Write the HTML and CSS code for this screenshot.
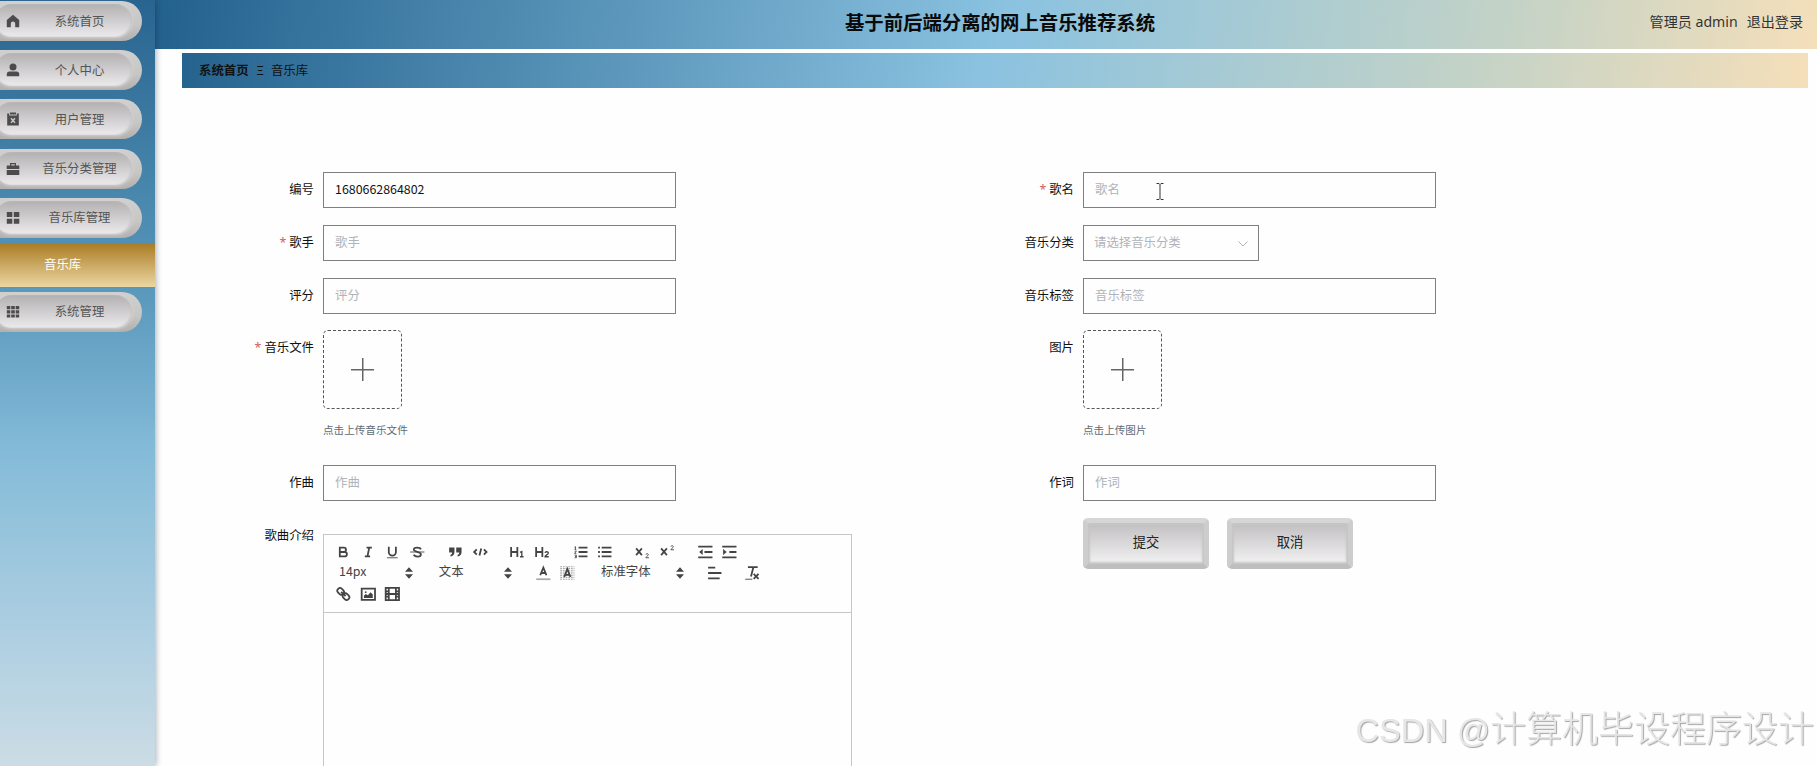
FILE: index.html
```html
<!DOCTYPE html>
<html lang="zh-CN">
<head>
    <meta charset="UTF-8">
    <meta name="viewport" content="width=device-width, initial-scale=1.0">
    <title>基于前后端分离的网上音乐推荐系统</title>
    <link rel="stylesheet" href="styles.css">
</head>
<body>

<div class="layout">
    <!-- Sidebar -->
    <nav class="sidebar">
        <a class="menu-item" href="#">
            <svg viewBox="0 0 14 14"><path d="M7 .8 13.2 6v7.2H9.2V9.6a2.2 2.2 0 0 0-4.4 0v3.6H.8V6z"/></svg>
            <span>系统首页</span>
        </a>
        <a class="menu-item" href="#">
            <svg viewBox="0 0 14 14"><circle cx="7" cy="4" r="3.5"/><path d="M.8 13.3v-2.2c0-1.6 1-2.6 2.6-2.6h7.2c1.6 0 2.6 1 2.6 2.6v2.2z"/></svg>
            <span>个人中心</span>
        </a>
        <a class="menu-item" href="#">
            <svg viewBox="0 0 14 14"><path d="M4 .4h6v2.2H4zM1.2 1.6h2v2h7.6v-2h2v12H1.2z"/><path class="cut" d="m5 6.2 4 4.6m0-4.6-4 4.6"/></svg>
            <span>用户管理</span>
        </a>
        <a class="menu-item" href="#">
            <svg viewBox="0 0 14 14"><path d="M4 3.5V1h6v2.5h3.3V7H.7V3.5zM5.2 3.5h3.6V2.2H5.2zM.7 8h12.6v5H.7z" fill-rule="evenodd"/></svg>
            <span>音乐分类管理</span>
        </a>
        <a class="menu-item" href="#">
            <svg viewBox="0 0 14 14"><path d="M.8 1h5.5v5H.8zM7.8 1h5.5v5H7.8zM.8 7.8h5.5v5H.8zM7.8 7.8h5.5v5H7.8z"/></svg>
            <span>音乐库管理</span>
        </a>
        <a class="submenu-item" href="#">音乐库</a>
        <a class="menu-item" href="#">
            <svg viewBox="0 0 14 14"><path d="M.8 1h3.5v3.2H.8zM5.2 1h3.6v3.2H5.2zM9.7 1h3.5v3.2H9.7zM.8 5.2h3.5v3.2H.8zM5.2 5.2h3.6v3.2H5.2zM9.7 5.2h3.5v3.2H9.7zM.8 9.4h3.5v3.2H.8zM5.2 9.4h3.6v3.2H5.2zM9.7 9.4h3.5v3.2H9.7z"/></svg>
            <span>系统管理</span>
        </a>
    </nav>

    <div class="main">
        <header class="header">
            <h1>基于前后端分离的网上音乐推荐系统</h1>
            <div class="user"><span>管理员 admin</span><a href="#">退出登录</a></div>
        </header>

        <div class="breadcrumb"><b>系统首页</b><i>Ξ</i><span>音乐库</span></div>

        <form class="form">
            <div class="column">
                <div class="row">
                    <label>编号</label>
                    <input type="text" value="1680662864802">
                </div>
                <div class="row required">
                    <label>歌手</label>
                    <input type="text" placeholder="歌手">
                </div>
                <div class="row">
                    <label>评分</label>
                    <input type="text" placeholder="评分">
                </div>
                <div class="row upload-row required">
                    <label>音乐文件</label>
                    <div class="upload">
                        <div class="upload-box"></div>
                        <p>点击上传音乐文件</p>
                    </div>
                </div>
                <div class="row">
                    <label>作曲</label>
                    <input type="text" placeholder="作曲">
                </div>
                <div class="row editor-row">
                    <label>歌曲介绍</label>
                    <div class="editor">
                        <div class="toolbar">
                            <div class="tools">
                                <span class="group">
                                    <svg viewBox="0 0 18 18"><path d="M5 4h4.5a2.5 2.5 0 0 1 0 5H5zM5 9h5.5a2.5 2.5 0 0 1 0 5H5z"/></svg>
                                    <svg viewBox="0 0 18 18"><path d="M7 4h6M5 14h6M10 4 8 14"/></svg>
                                    <svg viewBox="0 0 18 18"><path d="M5 3v6a4 4 0 0 0 8 0V3"/><path class="thin" d="M3 15.5h12"/></svg>
                                    <svg viewBox="0 0 18 18"><path class="thin" d="M1 9h16"/><path d="M13 6C12 3.5 5 3 5 6.3c0 3.2 8 2 8 5.4 0 3.3-7 3-8 .3"/></svg>
                                </span>
                                <span class="group">
                                    <svg viewBox="0 0 18 18"><path class="solid" d="M2 4h6v5c0 3-1.5 4.5-4.5 5v-2c1.4-.4 1.9-1.2 1.9-2.5H2zM10 4h6v5c0 3-1.5 4.5-4.5 5v-2c1.4-.4 1.9-1.2 1.9-2.5H10z"/></svg>
                                    <svg viewBox="0 0 18 18"><path d="M5 6 2 9l3 3M13 6l3 3-3 3M10 5 8 13"/></svg>
                                </span>
                                <span class="group">
                                    <svg viewBox="0 0 18 18"><path d="M2 3.5v11M9 3.5v11M2 9H9"/><path class="mid" d="m12 9.500 2-1v6M12 14.300h4"/></svg>
                                    <svg viewBox="0 0 18 18"><path d="M2 3.5v11M9 3.5v11M2 9h7"/><path class="mid" d="M12 10c.5-2 4-1.6 3.7.4-.2 1.4-3.7 2.4-3.7 3.9h4.2"/></svg>
                                </span>
                                <span class="group">
                                    <svg viewBox="0 0 18 18"><path d="M7 4h10M7 9h10M7 14h10"/><path class="thin" d="M2.5 3.5 3.5 3v3M2.5 6h2M2.5 8h2l-2 2.5h2M2.5 12.5h2v3h-2M3 14h1.5"/></svg>
                                    <svg viewBox="0 0 18 18"><path d="M6 4h11M6 9h11M6 14h11M2 4h2M2 9h2M2 14h2"/></svg>
                                </span>
                                <span class="group">
                                    <svg viewBox="0 0 18 18"><path d="m2 5 6.500 7.500m0-7.500L2 12.500"/><path class="thin" d="M13 12c.3-1.800 3-1.300 2.700.3-.2 1.100-2.700 2-2.700 3.200h3.500"/></svg>
                                    <svg viewBox="0 0 18 18"><path d="m2 5 6.500 7.500m0-7.500L2 12.500"/><path class="thin" d="M13 3c.3-1.800 3-1.300 2.700.3-.2 1.100-2.700 2-2.700 3.200h3.500"/></svg>
                                </span>
                                <span class="group">
                                    <svg viewBox="0 0 18 18"><path d="M1 3h16M1 15h16M8 9h9"/><path class="solid" d="M6 5.500v7L2 9z"/></svg>
                                    <svg viewBox="0 0 18 18"><path d="M1 3h16M1 15h16M9 9h8"/><path class="solid" d="M2 5.500v7L6 9z"/></svg>
                                </span>
                            </div>
                            <div class="tools">
                                <span class="group picker"><em>14px</em><svg viewBox="0 0 18 18"><path class="solid" d="m4.500 7.500 4.500-5 4.500 5zM4.500 10.500l4.500 5 4.500-5z"/></svg></span>
                                <span class="group picker"><em>文本</em><svg viewBox="0 0 18 18"><path class="solid" d="m4.500 7.500 4.500-5 4.500 5zM4.500 10.500l4.500 5 4.500-5z"/></svg></span>
                                <span class="group">
                                    <svg viewBox="0 0 18 18"><path d="M5.5 11.500 9 3l3.500 8.500M6.500 9h5"/><path class="pale" d="M1 16h16"/></svg>
                                    <svg viewBox="0 0 18 18"><path class="hatch" d="M1 2h16M1 4h16M1 6h16M1 8h16M1 10h16M1 12h16M1 14h16M1 16h16"/><path d="M5.5 13.500 9 4.500l3.500 9M6.500 11h5"/></svg>
                                </span>
                                <span class="group picker wide"><em>标准字体</em><svg viewBox="0 0 18 18"><path class="solid" d="m4.500 7.500 4.500-5 4.500 5zM4.500 10.500l4.500 5 4.500-5z"/></svg></span>
                                <span class="group">
                                    <svg viewBox="0 0 18 18"><path d="M2 3h8M2 9h15M2 15h13"/></svg>
                                </span>
                                <span class="group">
                                    <svg viewBox="0 0 18 18"><path d="M4 2.500h11M10 3 7.500 13M10.500 10l5.500 5.500m0-5.500-5.500 5.500"/><path class="thin" d="M1 16h8"/></svg>
                                </span>
                            </div>
                            <div class="tools">
                                <span class="group">
                                    <svg viewBox="0 0 18 18"><rect x="2" y="3" width="8" height="6" rx="3" transform="rotate(45 6 6)"/><rect x="8" y="9" width="8" height="6" rx="3" transform="rotate(45 12 12)"/><path d="m6.500 6.500 5 5"/></svg>
                                    <svg viewBox="0 0 18 18"><path d="M1.500 3h15v12.500h-15z"/><path class="solid" d="M4 13.500V11l2-2 2.500 1.500 3-3.500L14 9.500v4z"/><circle class="solid" cx="6" cy="7" r="1"/></svg>
                                    <svg viewBox="0 0 18 18"><path d="M1.500 2h15v14h-15zM5 2v14M13 2v14M5 9h8M2 6h3M2 9h3M2 12h3M13 6h3M13 9h3M13 12h3"/></svg>
                                </span>
                            </div>
                        </div>
                    </div>
                </div>
            </div>

            <div class="column">
                <div class="row required">
                    <label>歌名</label>
                    <input type="text" placeholder="歌名">
                    <svg class="ibeam" viewBox="0 0 8 17"><path d="M.5.5H3l1 1 1-1h2.500M4 1.500v14M.5 16.500H3l1-1 1 1h2.500"/></svg>
                </div>
                <div class="row">
                    <label>音乐分类</label>
                    <div class="select">请选择音乐分类<svg viewBox="0 0 10 6"><path d="m.5.5 4.500 4.500L9.500.5"/></svg></div>
                </div>
                <div class="row">
                    <label>音乐标签</label>
                    <input type="text" placeholder="音乐标签">
                </div>
                <div class="row upload-row">
                    <label>图片</label>
                    <div class="upload">
                        <div class="upload-box"></div>
                        <p>点击上传图片</p>
                    </div>
                </div>
                <div class="row">
                    <label>作词</label>
                    <input type="text" placeholder="作词">
                </div>
                <div class="buttons">
                    <button type="button">提交</button>
                    <button type="button">取消</button>
                </div>
            </div>
        </form>
    </div>
</div>

<div class="watermark"><span>CSDN @</span>计算机毕设程序设计</div>

</body>
</html>
```
FILE: styles.css
```css
* {
    box-sizing: border-box;
}
body {
    margin: 0;
    height: 100vh;
    overflow: hidden;
    background: #fefefe;
    color: #111;
    font-family: "Noto Sans CJK SC", sans-serif;
    font-size: 12.4px;
}
a {
    color: inherit;
    text-decoration: none;
}
.layout {
    display: flex;
    height: 100vh;
    overflow: hidden;
}

/* Sidebar */
.sidebar {
    position: relative;
    z-index: 1;
    flex: none;
    width: 155px;
    padding-top: 1px;
    background: linear-gradient(180deg, #28648f 0%, #5a98bc 38%, #84bbd8 59%, #b0d0e2 84%, #cbdce5 100%);
    box-shadow: 1px 0 6px rgba(0, 21, 41, .35);
}
.menu-item {
    display: flex;
    position: relative;
    align-items: center;
    width: 142px;
    height: 40px;
    margin-bottom: 9.2px;
    padding: 0 3px 0 6px;
    border-radius: 0 20px 20px 0;
    background: linear-gradient(180deg, #d0d0d0 0%, #c6c6c4 60%, #b3b0ae 100%);
    color: #555;
}
/* raised inner face of the pill */
.menu-item::before {
    content: "";
    position: absolute;
    inset: 3px 10px 4px -5px;
    border-radius: 17px;
    background: linear-gradient(180deg, #b3b0b2, #eceaec);
    box-shadow: 0 0 3px 1px #d2d1d0, inset -1px 0 2px #c4c3c4;
}
.menu-item svg {
    position: relative;
    width: 14px;
    height: 14px;
    fill: #4c4c4c;
}
.menu-item span {
    position: relative;
    flex: 1;
    padding-bottom: 1px;
    text-align: center;
}
.menu-item .cut {
    stroke: #ccc;
    stroke-width: 1.4;
}
.submenu-item {
    display: block;
    height: 44px;
    margin: -4px 0 5px;
    padding-left: 44px;
    background: linear-gradient(180deg, #a97b23, #ecd6a2);
    color: #fff;
    line-height: 43px;
}

/* Header */
.main {
    flex: 1;
    min-width: 0;
}
.header {
    display: flex;
    align-items: center;
    justify-content: center;
    position: relative;
    height: 49px;
    background: linear-gradient(100deg, #25638f 1%, #8ac2e0 51%, #c5d3c6 82%, #f5dfba 100%);
}
.header h1 {
    margin: 0 0 6px 28px;
    color: #0a0a0a;
    font-size: 19.4px;
    line-height: 28px;
}
.user {
    position: absolute;
    top: 12px;
    right: 14px;
    display: flex;
    gap: 9px;
    color: #333;
    font-family: "Noto Sans", "Noto Sans CJK SC", sans-serif;
    font-size: 14.1px;
    line-height: 20px;
}
.breadcrumb {
    display: flex;
    align-items: center;
    height: 35px;
    margin: 4px 9px 0 27px;
    padding: 0 0 2px 17px;
    background: linear-gradient(100deg, #25638f 0%, #8ac2e0 49%, #c5d3c6 80%, #f5dfba 100%);
}
.breadcrumb i {
    margin: 0 7px 0 8px;
    font-style: normal;
}

/* Form */
.form {
    display: grid;
    grid-template-columns: 760px 760px;
    padding: 84px 0 0 27px;
}
.row {
    display: flex;
    position: relative;
    height: 36px;
    margin-bottom: 16.8px;
}
.row label {
    width: 141px;
    padding-right: 9px;
    line-height: 35px;
    text-align: right;
}
.row.required label::before {
    content: "*";
    margin-right: 3px;
    color: #d0605e;
    font-family: "Noto Sans", sans-serif;
}
.row input,
.select {
    width: 353px;
    height: 36px;
    padding: 0 12px 2px 11px;
    border: 1px solid #808080;
    outline: none;
    background: none;
    color: #111;
    font: inherit;
}
.row input::placeholder {
    color: #b0b3ba;
    opacity: 1;
}
.select {
    display: flex;
    align-items: center;
    justify-content: space-between;
    width: 176px;
    padding: 0 10px 2px;
    color: #b0b3ba;
}
.select svg {
    width: 10px;
    height: 6px;
    margin-top: 4px;
    fill: none;
    stroke: #b0b3ba;
}
.ibeam {
    position: absolute;
    left: 214px;
    top: 11px;
    width: 8px;
    height: 17px;
    fill: none;
    stroke: #333;
}
.row.upload-row {
    height: 118px;
}
.upload-box {
    width: 79px;
    height: 79px;
    border: 1px dashed #555;
    border-radius: 5px;
    background:
        linear-gradient(#666, #666) center / 23px 1.5px no-repeat,
        linear-gradient(#666, #666) center / 1.5px 23px no-repeat;
}
.upload p {
    margin: 12px 0 0;
    color: #606a74;
    font-size: 10.6px;
    line-height: 18px;
}

/* Rich text editor */
.row.editor-row {
    height: 248px;
    margin-bottom: 0;
}
.editor {
    flex: none;
    width: 529px;
    margin-top: 16px;
    border: 1px solid #c6c6c6;
    border-bottom: 0;
}
.toolbar {
    height: 78px;
    padding: 7px;
    border-bottom: 1px solid #c6c6c6;
}
.tools {
    display: flex;
    gap: 13.1px;
    height: 21px;
}
.group {
    display: flex;
    align-items: center;
}
.group svg {
    width: 24.7px;
    height: 16px;
    fill: none;
    stroke: #444;
    stroke-width: 2;
}
.group .thin {
    stroke-width: 1;
}
.group .mid {
    stroke-width: 1.5;
}
.group .solid {
    fill: #444;
    stroke: none;
}
.group .pale {
    stroke: #aaa;
}
.group .hatch {
    stroke: #999;
    stroke-width: 1;
    stroke-dasharray: 2 1;
}
.picker {
    justify-content: space-between;
    width: 86.7px;
    padding-left: 8px;
    color: #444;
    line-height: 18px;
}
.picker em {
    padding-bottom: 5px;
    font-style: normal;
}
.picker svg {
    width: 16px;
    margin-right: 1px;
}
.picker.wide {
    width: 95.6px;
}

/* Buttons */
.buttons {
    display: flex;
    gap: 18px;
    padding-left: 141px;
}
.buttons button {
    width: 126px;
    height: 51px;
    padding: 0 0 3px;
    border: 5px solid;
    border-color: #d6d6d6 #cdcdcd #bebebe;
    border-radius: 5px;
    background: linear-gradient(180deg, #c1bfc1, #f3f2f3);
    box-shadow: inset 0 0 2px 2px #c6c6c3;
    color: #222;
    font-family: inherit;
    font-size: 13.3px;
}

.watermark {
    position: fixed;
    right: 3px;
    bottom: 10px;
    color: #e6e6e6;
    font-size: 36px;
    font-weight: 300;
    line-height: 50px;
    text-shadow: 1px 1px 1px #a4a4a4;
    white-space: nowrap;
}
.watermark span {
    font-family: "Liberation Sans", sans-serif;
    font-size: 32.6px;
}
```
